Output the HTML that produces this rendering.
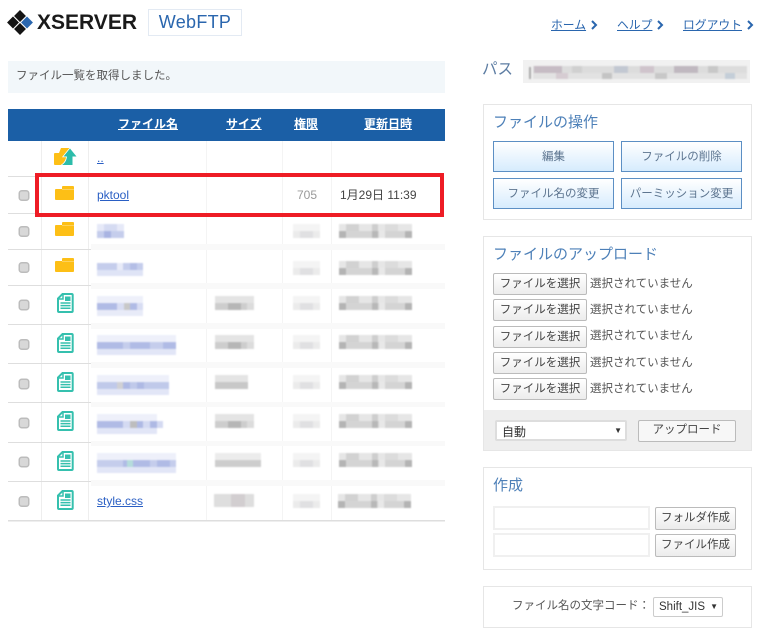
<!DOCTYPE html>
<html lang="ja">
<head>
<meta charset="utf-8">
<title>WebFTP</title>
<style>
html,body{margin:0;padding:0;background:#fff}
body{width:768px;height:640px;overflow:hidden}
#w{position:relative;width:768px;height:640px;overflow:hidden;filter:blur(.3px);font-family:"Liberation Sans","Noto Sans CJK JP",sans-serif;font-size:12px;color:#444}
.a{position:absolute;white-space:nowrap}
.box{position:absolute;box-sizing:border-box}
.panel{position:absolute;left:483px;width:269px;box-sizing:border-box;border:1px solid #e6e6e6;background:#fff}
.ttl{position:absolute;left:493px;font-size:15px;color:#4d80b8;line-height:20px;white-space:nowrap}
.bl{position:absolute;box-sizing:border-box;width:121px;height:31px;border:1px solid #5c8fc4;background:linear-gradient(#fff,#d6ebfd);color:#5d7590;font-size:11.500px;line-height:30px;text-align:center;white-space:nowrap}
.fb{position:absolute;left:493px;box-sizing:border-box;width:94px;height:22px;border:1px solid #bbb;border-radius:2px;background:linear-gradient(#fff,#ececec);color:#444;font-size:11.500px;line-height:20px;text-align:center;white-space:nowrap}
.fn{position:absolute;left:590px;font-size:11.500px;line-height:22px;color:#555;white-space:nowrap}
.gb{position:absolute;box-sizing:border-box;border:1px solid #bbb;border-radius:2px;background:linear-gradient(#fff,#ececec);color:#444;font-size:11.500px;text-align:center;white-space:nowrap}
.ip{position:absolute;left:493px;width:157px;height:24px;box-sizing:border-box;border:2px solid #f0f0f0;background:#fff}
.nav{position:absolute;top:16px;font-size:11.800px;line-height:18px;color:#2a66ae;text-decoration:underline;white-space:nowrap}
.th{position:absolute;top:116px;font-size:12px;font-weight:bold;line-height:17px;color:#fff;text-decoration:underline;white-space:nowrap}
a.l{position:absolute;left:97px;color:#2a5fc4;text-decoration:underline;font-size:12px;line-height:16px}
svg{position:absolute;left:0;top:0}
</style>
</head>
<body>
<div id="w">

<svg width="768" height="640" viewBox="0 0 768 640">
  <defs>
    <filter id="b" x="-10%" y="-20%" width="120%" height="140%"><feGaussianBlur stdDeviation="0.7"/></filter>
    <filter id="b2" x="-10%" y="-20%" width="120%" height="140%"><feGaussianBlur stdDeviation="0.8"/></filter>
    <g id="date">
      <rect x="0" y="0" width="73" height="7" fill="#e6e6e6"/>
      <rect x="7" y="0" width="13" height="7" fill="#d2d2d2"/>
      <rect x="33" y="0" width="6" height="7" fill="#cecece"/>
      <rect x="46" y="0" width="13" height="7" fill="#dcdcdc"/>
      <rect x="0" y="7" width="73" height="7" fill="#d4d4d4"/>
      <rect x="0" y="7" width="7" height="7" fill="#b4b4b4"/>
      <rect x="33" y="7" width="6" height="7" fill="#b8b8b8"/>
      <rect x="66" y="7" width="7" height="7" fill="#b4b4b4"/>
      <rect x="40" y="7" width="6" height="7" fill="#e8e8e8"/>
    </g>
    <g id="perm">
      <rect x="0" y="0" width="27" height="7" fill="#f4f4f4"/>
      <rect x="0" y="7" width="27" height="7" fill="#ebebeb"/>
      <rect x="7" y="7" width="13" height="7" fill="#e0e0e2"/>
    </g>
    <g id="size">
      <rect x="0" y="0" width="39" height="7" fill="#e4e4e4"/>
      <rect x="0" y="7" width="39" height="7" fill="#cdcdcd"/>
      <rect x="13" y="7" width="13" height="7" fill="#b6b6b6"/>
      <rect x="32" y="7" width="7" height="7" fill="#dcdcdc"/>
    </g>
    <g id="doc">
      <path d="M5.500 1H14.700a1 1 0 0 1 1 1v16a1 1 0 0 1-1 1H2a1 1 0 0 1-1-1V5.500z" fill="#fff" stroke="#35c0ae" stroke-width="2"/>
      <path d="M1 6h5V1" fill="none" stroke="#35c0ae" stroke-width="1.500"/>
      <rect x="8" y="3.500" width="5.500" height="4.500" fill="#35c0ae"/>
      <path d="M3.500 10h10M3.500 12.600h10M3.500 15.200h10" stroke="#35c0ae" stroke-width="1.500" fill="none"/>
    </g>
    <g id="folder">
      <path d="M7 4V1a1 1 0 0 1 1-1h10a1 1 0 0 1 1 1v3z" fill="#fdbf16"/>
      <path d="M0 4a1 1 0 0 1 1-1h17a1 1 0 0 1 1 1v9a1 1 0 0 1-1 1H1a1 1 0 0 1-1-1z" fill="#fdbf16"/>
      <rect x="7" y="3" width="12" height="0.600" fill="#fff" opacity=".5"/>
    </g>
    <g id="cb">
      <rect x="0.750" y="0.750" width="9.500" height="9.500" rx="2.500" fill="#d8d8d8" stroke="#bcbcbc" stroke-width="1.500"/>
    </g>
  </defs>

  <!-- logo -->
  <g>
    <rect x="15.800" y="11.800" width="8.400" height="8.400" transform="rotate(45 20 16)" fill="#141414"/>
    <rect x="8.800" y="18.300" width="8.400" height="8.400" transform="rotate(45 13 22.500)" fill="#141414"/>
    <rect x="15.800" y="24.800" width="8.400" height="8.400" transform="rotate(45 20 29)" fill="#141414"/>
    <rect x="22.800" y="18.300" width="8.400" height="8.400" transform="rotate(45 27 22.500)" fill="#2a66ae"/>
  </g>

  <!-- table structure -->
  <rect x="8" y="109" width="437" height="32" fill="#1b5fa6"/>
  <g>
    <rect x="41" y="141" width="1" height="380" fill="#eeeeee"/>
    <rect x="88" y="141" width="1" height="380" fill="#eeeeee"/>
    <rect x="206" y="141" width="1" height="380" fill="#f4f4f4"/>
    <rect x="282" y="141" width="1" height="380" fill="#f4f4f4"/>
    <rect x="331" y="141" width="1" height="380" fill="#f4f4f4"/>
  </g>
  <g fill="#dedede">
    <rect x="8" y="176" width="83" height="1"/>
    <rect x="8" y="213" width="83" height="1"/>
    <rect x="8" y="249" width="83" height="1"/>
    <rect x="8" y="285" width="83" height="1"/>
    <rect x="8" y="324" width="83" height="1"/>
    <rect x="8" y="363" width="83" height="1"/>
    <rect x="8" y="402" width="83" height="1"/>
    <rect x="8" y="442" width="83" height="1"/>
    <rect x="8" y="481" width="83" height="1"/>
    <rect x="8" y="520" width="437" height="1.500"/>
  </g>
  <g fill="#f9f9f9">
    <rect x="91" y="244" width="354" height="6"/>
    <rect x="91" y="283" width="354" height="6"/>
    <rect x="91" y="323" width="354" height="6"/>
    <rect x="91" y="362" width="354" height="6"/>
    <rect x="91" y="402" width="354" height="5"/>
    <rect x="91" y="441" width="354" height="5"/>
    <rect x="91" y="480" width="354" height="6"/>
  </g>

  <!-- up folder icon -->
  <path d="M55 153h4l1-2.500 1-2.500h9V165H55a1 1 0 0 1-1-1v-10a1 1 0 0 1 1-1z" fill="#fdbf16"/>
  <path d="M62 165c3-2 4.500-4.500 5-8.500H63.500L70 148.500 76.500 156.500h-4V165z" fill="#fff" stroke="#fff" stroke-width="1.500"/>
  <path d="M62 165c3-2 4.500-4.500 5-8.500H63.500L70 148.500 76.500 156.500h-4V165z" fill="#2cbcaa"/>

  <!-- folders -->
  <use href="#folder" x="55" y="186"/>
  <use href="#folder" x="55" y="222"/>
  <use href="#folder" x="55" y="258"/>

  <!-- docs -->
  <use href="#doc" x="57" y="293"/>
  <use href="#doc" x="57" y="333"/>
  <use href="#doc" x="57" y="372"/>
  <use href="#doc" x="57" y="411"/>
  <use href="#doc" x="57" y="451"/>
  <use href="#doc" x="57" y="490"/>

  <!-- checkboxes -->
  <use href="#cb" x="18.500" y="190"/>
  <use href="#cb" x="18.500" y="226"/>
  <use href="#cb" x="18.500" y="262"/>
  <use href="#cb" x="18.500" y="299.500"/>
  <use href="#cb" x="18.500" y="339"/>
  <use href="#cb" x="18.500" y="378.500"/>
  <use href="#cb" x="18.500" y="417.500"/>
  <use href="#cb" x="18.500" y="456.500"/>
  <use href="#cb" x="18.500" y="496"/>

  <!-- blurred names -->
  <g filter="url(#b)">
    <g>
      <rect x="97" y="224" width="27" height="7" fill="#e6e9f8"/>
      <rect x="104" y="224" width="13" height="7" fill="#d5dbf2"/>
      <rect x="97" y="231" width="27" height="7" fill="#c5cdec"/>
      <rect x="104" y="231" width="7" height="7" fill="#a9b4e2"/>
    </g>
    <g>
      <rect x="97" y="263" width="46" height="7" fill="#c5cdec"/>
      <rect x="117" y="263" width="6" height="7" fill="#e8ebf8"/>
      <rect x="130" y="263" width="7" height="7" fill="#b4bee6"/>
      <rect x="97" y="270" width="46" height="6" fill="#dfe4f6"/>
    </g>
    <g>
      <rect x="97" y="296" width="46" height="7" fill="#eef0fa"/>
      <rect x="97" y="303" width="46" height="7" fill="#d8ddf3"/>
      <rect x="97" y="303" width="20" height="7" fill="#b0bbe5"/>
      <rect x="124" y="303" width="6" height="7" fill="#c8c8c8"/>
      <rect x="130" y="303" width="7" height="7" fill="#b0bbe5"/>
      <rect x="97" y="310" width="46" height="6" fill="#e8ebf8"/>
    </g>
    <g>
      <rect x="97" y="335" width="79" height="7" fill="#eef0fa"/>
      <rect x="97" y="342" width="79" height="7" fill="#c5cdec"/>
      <rect x="97" y="342" width="26" height="7" fill="#b0bbe5"/>
      <rect x="130" y="342" width="20" height="7" fill="#b0bbe5"/>
      <rect x="163" y="342" width="13" height="7" fill="#b0bbe5"/>
      <rect x="97" y="349" width="79" height="6" fill="#e2e6f7"/>
    </g>
    <g>
      <rect x="97" y="375" width="72" height="7" fill="#eef0fa"/>
      <rect x="97" y="382" width="72" height="7" fill="#c0c9ea"/>
      <rect x="117" y="382" width="6" height="7" fill="#d0d0d4"/>
      <rect x="123" y="382" width="7" height="7" fill="#aeb9e4"/>
      <rect x="137" y="382" width="7" height="7" fill="#aeb9e4"/>
      <rect x="97" y="389" width="72" height="6" fill="#e2e6f7"/>
    </g>
    <g>
      <rect x="97" y="414" width="60" height="7" fill="#eef0fa"/>
      <rect x="97" y="421" width="66" height="7" fill="#d4daf2"/>
      <rect x="97" y="421" width="26" height="7" fill="#b0bbe5"/>
      <rect x="130" y="421" width="7" height="7" fill="#bdbdbd"/>
      <rect x="137" y="421" width="6" height="7" fill="#aeb9e4"/>
      <rect x="150" y="421" width="7" height="7" fill="#aeb9e4"/>
      <rect x="97" y="428" width="60" height="6" fill="#e2e6f7"/>
    </g>
    <g>
      <rect x="97" y="453" width="79" height="7" fill="#eef0fa"/>
      <rect x="97" y="460" width="79" height="7" fill="#c5cdec"/>
      <rect x="123" y="460" width="7" height="7" fill="#b0bbe5"/>
      <rect x="127" y="460" width="6" height="7" fill="#b5dcdc"/>
      <rect x="133" y="460" width="17" height="7" fill="#b0bbe5"/>
      <rect x="157" y="460" width="13" height="7" fill="#b0bbe5"/>
      <rect x="97" y="467" width="79" height="6" fill="#e2e6f7"/>
    </g>
  </g>

  <!-- blurred sizes / perms / dates -->
  <g filter="url(#b2)">
    <use href="#perm" x="293" y="224"/>
    <use href="#date" x="339" y="224"/>
    <use href="#perm" x="293" y="261"/>
    <use href="#date" x="339" y="261"/>

    <use href="#size" x="215" y="296"/>
    <use href="#perm" x="293" y="296"/>
    <use href="#date" x="339" y="296"/>

    <use href="#size" x="215" y="335"/>
    <use href="#perm" x="293" y="335"/>
    <use href="#date" x="339" y="335"/>

    <rect x="215" y="375" width="33" height="7" fill="#e4e4e4"/>
    <rect x="215" y="382" width="33" height="7" fill="#c8c8c8"/>
    <use href="#perm" x="293" y="375"/>
    <use href="#date" x="339" y="375"/>

    <use href="#size" x="215" y="414"/>
    <use href="#perm" x="293" y="414"/>
    <use href="#date" x="339" y="414"/>

    <rect x="215" y="453" width="46" height="7" fill="#ececec"/>
    <rect x="215" y="460" width="46" height="7" fill="#cdcdcd"/>
    <use href="#perm" x="293" y="453"/>
    <use href="#date" x="339" y="453"/>

    <rect x="214" y="494" width="40" height="13" fill="#dedede"/>
    <rect x="231" y="494" width="14" height="13" fill="#d2ced0"/>
    <use href="#perm" x="293" y="494"/>
    <use href="#date" x="338" y="494"/>
  </g>

  <!-- path blur -->
  <rect x="523" y="60" width="227" height="23" fill="#f1f1f1"/>
  <g filter="url(#b2)">
    <rect x="529" y="67" width="2" height="12" fill="#aaa"/>
    <rect x="533" y="66" width="214" height="7" fill="#dcdcdc"/>
    <rect x="533" y="73" width="214" height="6" fill="#e2e2e2"/>
    <rect x="534" y="66" width="28" height="7" fill="#c6bcc4"/>
    <rect x="572" y="66" width="10" height="7" fill="#d0d0d0"/>
    <rect x="614" y="66" width="14" height="7" fill="#c2c8d2"/>
    <rect x="640" y="66" width="14" height="7" fill="#cfc4cc"/>
    <rect x="674" y="66" width="24" height="7" fill="#c0b8c0"/>
    <rect x="708" y="66" width="10" height="7" fill="#c8c8c8"/>
    <rect x="556" y="73" width="12" height="6" fill="#d6ccd2"/>
    <rect x="602" y="73" width="10" height="6" fill="#c4c4c4"/>
    <rect x="655" y="73" width="12" height="6" fill="#c8c8c8"/>
    <rect x="725" y="73" width="10" height="6" fill="#c4ced8"/>
  </g>

  <!-- nav chevrons -->
  <g fill="none" stroke="#2a66ae" stroke-width="2">
    <path d="M592 21l4 4-4 4"/>
    <path d="M658 21l4 4-4 4"/>
    <path d="M748 21l4 4-4 4"/>
  </g>
</svg>

<!-- header -->
<div class="a" style="left:37px;top:9px;font-size:21px;line-height:28px;font-weight:bold;color:#1a1a1a">XSERVER</div>
<div class="box" style="left:148px;top:9px;width:94px;height:27px;border:1px solid #e3eaf3;text-align:center;font-size:18px;line-height:25px;color:#2a66ae;letter-spacing:.3px">WebFTP</div>

<span class="nav" style="left:551px">ホーム</span>
<span class="nav" style="left:617px">ヘルプ</span>
<span class="nav" style="left:683px">ログアウト</span>

<!-- message -->
<div class="box" style="left:8px;top:61px;width:437px;height:32px;background:#f2f7fa;padding-left:8px;font-size:11.500px;line-height:31px;color:#555">ファイル一覧を取得しました。</div>

<!-- table head -->
<span class="th" style="left:118px">ファイル名</span>
<span class="th" style="left:226px">サイズ</span>
<span class="th" style="left:294px">権限</span>
<span class="th" style="left:364px">更新日時</span>

<!-- table text -->
<a class="l" style="top:150px">..</a>
<a class="l" style="top:187px">pktool</a>
<a class="l" style="top:493px">style.css</a>
<span class="a" style="left:297px;top:187px;line-height:16px;color:#999">705</span>
<span class="a" style="left:340px;top:187px;line-height:16px;color:#444">1月29日 11:39</span>

<!-- red highlight -->
<div class="box" style="left:35px;top:173px;width:409px;height:44px;border:4px solid #ee1c25"></div>

<!-- path -->
<div class="a" style="left:482px;top:58px;font-size:15.500px;line-height:24px;color:#5d7da3">パス</div>

<!-- file ops -->
<div class="panel" style="top:104px;height:116px"></div>
<div class="ttl" style="top:113px">ファイルの操作</div>
<div class="bl" style="left:493px;top:141px">編集</div>
<div class="bl" style="left:621px;top:141px">ファイルの削除</div>
<div class="bl" style="left:493px;top:178px">ファイル名の変更</div>
<div class="bl" style="left:621px;top:178px">パーミッション変更</div>

<!-- upload -->
<div class="panel" style="top:236px;height:215px"></div>
<div class="box" style="left:484px;top:410px;width:267px;height:40px;background:#eee"></div>
<div class="ttl" style="top:245px">ファイルのアップロード</div>
<div class="fb" style="top:273px">ファイルを選択</div><div class="fn" style="top:273px">選択されていません</div>
<div class="fb" style="top:299px">ファイルを選択</div><div class="fn" style="top:299px">選択されていません</div>
<div class="fb" style="top:326px">ファイルを選択</div><div class="fn" style="top:325px">選択されていません</div>
<div class="fb" style="top:352px">ファイルを選択</div><div class="fn" style="top:352px">選択されていません</div>
<div class="fb" style="top:378px">ファイルを選択</div><div class="fn" style="top:378px">選択されていません</div>
<div class="box" style="left:495px;top:420px;width:132px;height:21px;background:#fff;border:2px solid #ddd;border-radius:2px;padding-left:5px;font-size:12px;line-height:20px;color:#333">自動<span style="position:absolute;right:3px;top:0;font-size:8px;line-height:17px">▼</span></div>
<div class="gb" style="left:638px;top:420px;width:98px;height:22px;line-height:19px;background:#f7f7f7">アップロード</div>

<!-- create -->
<div class="panel" style="top:467px;height:103px"></div>
<div class="ttl" style="top:476px">作成</div>
<div class="ip" style="top:506px"></div>
<div class="ip" style="top:533px"></div>
<div class="gb" style="left:655px;top:507px;width:81px;height:23px;line-height:21px">フォルダ作成</div>
<div class="gb" style="left:655px;top:534px;width:81px;height:23px;line-height:21px">ファイル作成</div>

<!-- charset -->
<div class="panel" style="top:586px;height:42px"></div>
<div class="a" style="left:512px;top:597px;font-size:11.500px;line-height:18px;color:#555">ファイル名の文字コード：</div>
<div class="box" style="left:653px;top:597px;width:70px;height:20px;background:#fff;border:1px solid #ccc;border-radius:2px;padding-left:5px;font-size:11.500px;line-height:18px;color:#333">Shift_JIS<span style="position:absolute;right:4px;top:0;font-size:8px;line-height:18px">▼</span></div>

</div>
</body>
</html>
